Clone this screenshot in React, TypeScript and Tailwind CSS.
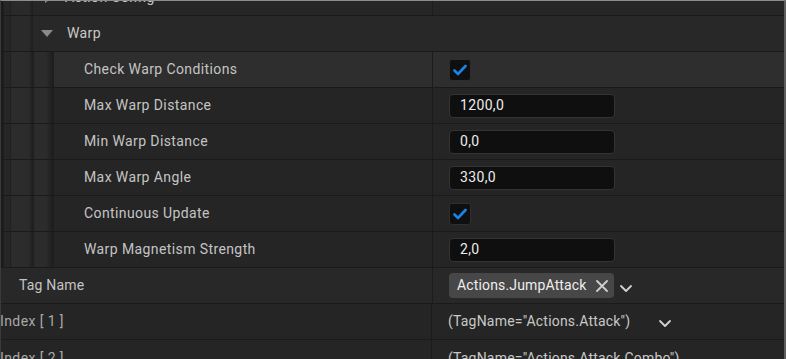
import React from "react";

const font = { fontFamily: "Roboto, 'Noto Sans', sans-serif" };

function StripesCat() {
  return (
    <>
      <div className="w-[10px] shrink-0 bg-[linear-gradient(to_right,#1b1b1b_20%,#262626_35%,#262626_85%,#1d1d1d)]" />
      <div className="w-[22px] shrink-0 bg-[linear-gradient(to_right,#2a2a2a_80%,#1e1e1e)]" />
    </>
  );
}

function StripesChild() {
  return (
    <>
      <div className="w-[10px] shrink-0 bg-[linear-gradient(to_right,#1b1b1b_20%,#262626_35%,#262626_85%,#1d1d1d)]" />
      <div className="w-[22px] shrink-0 bg-[linear-gradient(to_right,#2c2c2c_80%,#1e1e1e)]" />
      <div className="w-[21px] shrink-0 bg-[linear-gradient(to_right,#1c1c1c_0%,#2c2c2c_8%,#2c2c2c_60%,#1c1c1c)]" />
    </>
  );
}

function Check() {
  return (
    <div className="w-[22px] h-[22px] rounded-[3px] bg-[#0f0f0f] border border-[#2e2e2e] flex items-center justify-center">
      <svg width="14" height="12" viewBox="0 0 14 12">
        <polyline points="1.5,6.5 5,10 12.5,2" fill="none" stroke="#1d82e6" strokeWidth="2.6" strokeLinecap="round" strokeLinejoin="round" />
      </svg>
    </div>
  );
}

function NumInput({ v }: { v: string }) {
  return (
    <div className="w-[166px] h-[24px] rounded-[4px] bg-[#0f0f0f] border border-[#333333] flex items-center pl-[10px] text-[14px] tracking-[0.35px] text-[#ececec]">
      {v}
    </div>
  );
}

function Chevron() {
  return (
    <svg width="14" height="10" viewBox="0 0 14 10">
      <polyline points="2,3 7,8 12,3" fill="none" stroke="#d2d2d2" strokeWidth="1.8" strokeLinecap="round" strokeLinejoin="round" />
    </svg>
  );
}

function ChildRow({ label, value, hover }: { label: string; value: React.ReactNode; hover?: boolean }) {
  const bg = hover ? "bg-[#2e2e2e]" : "bg-[#252525]";
  return (
    <div className="flex h-[36px] border-b border-[#1a1a1a]">
      <div className={`flex w-[431px] shrink-0 ${bg}`}>
        <StripesChild />
        <div className="flex items-center pl-[30px] text-[14px] tracking-[0.4px] text-[#c4c4c4]">{label}</div>
      </div>
      <div className="w-px bg-[#1c1c1c]" />
      <div className={`flex-1 flex items-center pl-[16px] ${bg}`}>{value}</div>
    </div>
  );
}

export default function App() {
  return (
    <div style={font} className="w-[786px] h-[359px] overflow-hidden bg-[#242424] border-t border-t-[#8c8c8c] border-r-2 border-r-[#5e5e5e] border-l border-l-[#3a3a3a]">
      <div className="-mt-[21px]">
        {/* Partial top category row */}
        <div className="flex h-[36px] border-b border-[#1a1a1a] bg-[#262626]">
          <div className="flex w-[431px] shrink-0">
            <StripesCat />
            <div className="flex items-center pl-[10px] text-[14px] tracking-[0.4px] text-[#c4c4c4]">
              <svg width="10" height="10" viewBox="0 0 10 10" className="mr-[12px]">
                <polygon points="2,0 9,5 2,10" fill="#8a8a8a" />
              </svg>
              Action Config
            </div>
          </div>
          <div className="w-px bg-[#1c1c1c]" />
          <div className="flex-1" />
        </div>
        {/* Warp category row */}
        <div className="flex h-[36px] border-b border-[#1a1a1a] bg-[#282828]">
          <StripesCat />
          <div className="flex items-center pl-[8px] text-[14px] tracking-[0.4px] text-[#c8c8c8]">
            <svg width="12" height="8" viewBox="0 0 12 8" className="mr-[14px] mt-[1px]">
              <polygon points="0,0 12,0 6,7" fill="#8a8a8a" />
            </svg>
            Warp
          </div>
        </div>
        <ChildRow label="Check Warp Conditions" value={<Check />} hover />
        <ChildRow label="Max Warp Distance" value={<NumInput v="1200,0" />} />
        <ChildRow label="Min Warp Distance" value={<NumInput v="0,0" />} />
        <ChildRow label="Max Warp Angle" value={<NumInput v="330,0" />} />
        <ChildRow label="Continuous Update" value={<Check />} />
        <ChildRow label="Warp Magnetism Strength" value={<NumInput v="2,0" />} />
        {/* Tag Name */}
        <div className="flex h-[36px] border-b border-[#1a1a1a] bg-[#282828]">
          <div className="w-[431px] shrink-0 flex items-center pl-[18px] text-[14px] tracking-[0.2px] text-[#c4c4c4]">Tag Name</div>
          <div className="w-px bg-[#1c1c1c]" />
          <div className="flex-1 flex items-center pl-[16px]">
            <div className="h-[25px] w-[165px] rounded-[4px] bg-[#474747] flex items-center pl-[8px] pr-[6px] text-[14px] tracking-[0.15px] text-[#eeeeee]">
              <span className="flex-1">Actions.JumpAttack</span>
              <svg width="12" height="12" viewBox="0 0 12 12">
                <path d="M1 1 L11 11 M11 1 L1 11" stroke="#cfcfcf" strokeWidth="1.8" strokeLinecap="round" />
              </svg>
            </div>
            <div className="ml-[5px] mt-[4px]">
              <Chevron />
            </div>
          </div>
        </div>
        {/* Index 1 */}
        <div className="flex h-[36px] border-b border-[#1a1a1a] bg-[#252525]">
          <div className="w-[431px] shrink-0 flex items-center -ml-[1px] text-[14px] tracking-[0.4px] text-[#a8a8a8]">Index [ 1 ]</div>
          <div className="w-px bg-[#1c1c1c]" />
          <div className="flex-1 flex items-center pl-[16px] text-[14px] tracking-[0.2px] text-[#c8c8c8]">
            <span>(TagName="Actions.Attack")</span>
            <div className="ml-[28px] mt-[2px]">
              <Chevron />
            </div>
          </div>
        </div>
        {/* Index 2 partial */}
        <div className="flex h-[36px] bg-[#252525]">
          <div className="w-[431px] shrink-0 flex items-center -ml-[1px] text-[14px] tracking-[0.4px] text-[#a8a8a8]">Index [ 2 ]</div>
          <div className="w-px bg-[#1c1c1c]" />
          <div className="flex-1 flex items-center pl-[16px] text-[14px] tracking-[0.2px] text-[#c8c8c8]">
            <span>(TagName="Actions.Attack.Combo")</span>
          </div>
        </div>
      </div>
    </div>
  );
}
